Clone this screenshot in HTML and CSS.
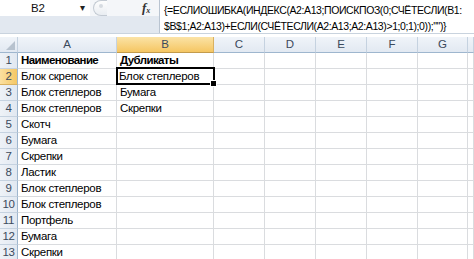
FILE: index.html
```html
<!DOCTYPE html>
<html lang="ru">
<head>
    <meta charset="UTF-8">
    <title>Дубликаты</title>
    <link rel="stylesheet" href="styles.css">
</head>
<body>
    <div class="formula-bar">
        <div class="name-side">
            <div class="name-row">
                <div class="name-box">B2<span class="drop">&#9662;</span></div>
                <div class="splitter"><span></span></div>
                <div class="fx"><i>f</i><sub>x</sub></div>
            </div>
        </div>
        <div class="formula">{=ЕСЛИОШИБКА(ИНДЕКС(A2:A13;ПОИСКПОЗ(0;СЧЁТЕСЛИ(B1:<br>$B$1;A2:A13)+ЕСЛИ(СЧЁТЕСЛИ(A2:A13;A2:A13)&gt;1;0;1);0));"")}</div>
    </div>

    <div class="sheet">
        <div class="row heads">
            <div class="corner"><span class="tri"></span></div>
            <div class="ch">A</div><div class="ch active">B</div><div class="ch">C</div><div class="ch">D</div>
            <div class="ch">E</div><div class="ch">F</div><div class="ch">G</div><div class="ch"></div>
        </div>
        <div class="row">
            <div class="rh">1</div>
            <div class="c b">Наименование</div><div class="c b">Дубликаты</div>
            <div class="c"></div><div class="c"></div><div class="c"></div><div class="c"></div><div class="c"></div><div class="c"></div>
        </div>
        <div class="row">
            <div class="rh active">2</div>
            <div class="c">Блок скрепок</div><div class="c sel">Блок степлеров</div>
            <div class="c"></div><div class="c"></div><div class="c"></div><div class="c"></div><div class="c"></div><div class="c"></div>
        </div>
        <div class="row">
            <div class="rh">3</div>
            <div class="c">Блок степлеров</div><div class="c">Бумага</div>
            <div class="c"></div><div class="c"></div><div class="c"></div><div class="c"></div><div class="c"></div><div class="c"></div>
        </div>
        <div class="row">
            <div class="rh">4</div>
            <div class="c">Блок степлеров</div><div class="c">Скрепки</div>
            <div class="c"></div><div class="c"></div><div class="c"></div><div class="c"></div><div class="c"></div><div class="c"></div>
        </div>
        <div class="row">
            <div class="rh">5</div>
            <div class="c">Скотч</div><div class="c"></div>
            <div class="c"></div><div class="c"></div><div class="c"></div><div class="c"></div><div class="c"></div><div class="c"></div>
        </div>
        <div class="row">
            <div class="rh">6</div>
            <div class="c">Бумага</div><div class="c"></div>
            <div class="c"></div><div class="c"></div><div class="c"></div><div class="c"></div><div class="c"></div><div class="c"></div>
        </div>
        <div class="row">
            <div class="rh">7</div>
            <div class="c">Скрепки</div><div class="c"></div>
            <div class="c"></div><div class="c"></div><div class="c"></div><div class="c"></div><div class="c"></div><div class="c"></div>
        </div>
        <div class="row">
            <div class="rh">8</div>
            <div class="c">Ластик</div><div class="c"></div>
            <div class="c"></div><div class="c"></div><div class="c"></div><div class="c"></div><div class="c"></div><div class="c"></div>
        </div>
        <div class="row">
            <div class="rh">9</div>
            <div class="c">Блок степлеров</div><div class="c"></div>
            <div class="c"></div><div class="c"></div><div class="c"></div><div class="c"></div><div class="c"></div><div class="c"></div>
        </div>
        <div class="row">
            <div class="rh">10</div>
            <div class="c">Блок степлеров</div><div class="c"></div>
            <div class="c"></div><div class="c"></div><div class="c"></div><div class="c"></div><div class="c"></div><div class="c"></div>
        </div>
        <div class="row">
            <div class="rh">11</div>
            <div class="c">Портфель</div><div class="c"></div>
            <div class="c"></div><div class="c"></div><div class="c"></div><div class="c"></div><div class="c"></div><div class="c"></div>
        </div>
        <div class="row">
            <div class="rh">12</div>
            <div class="c">Бумага</div><div class="c"></div>
            <div class="c"></div><div class="c"></div><div class="c"></div><div class="c"></div><div class="c"></div><div class="c"></div>
        </div>
        <div class="row">
            <div class="rh">13</div>
            <div class="c">Скрепки</div><div class="c"></div>
            <div class="c"></div><div class="c"></div><div class="c"></div><div class="c"></div><div class="c"></div><div class="c"></div>
        </div>
    </div>
</body>
</html>
```

FILE: styles.css
```css
body {
    margin: 0;
    font-family: 'Liberation Sans', Arial, sans-serif;
    background: #fff;
    color: #000;
    overflow: hidden;
}
.formula-bar {
    display: flex;
    height: 33px;
    border-bottom: 1px solid #c9d3de;
}
.name-side {
    width: 159px;
    background: #e2e8f0;
    border-right: 1px solid #b9c4d1;
}
.name-row {
    display: flex;
    height: 16px;
    background: #f4f6f9;
}
.name-box {
    position: relative;
    width: 90px;
    background: #fff;
    font-size: 11.5px;
    line-height: 16px;
    text-align: center;
    padding-right: 14px;
    box-sizing: border-box;
    color: #111;
}
.drop {
    position: absolute;
    right: 5px;
    top: 0;
    font-size: 10px;
    color: #222;
}
.splitter {
    width: 14px;
    margin-left: 3px;
    border: 1px solid #c3cad3;
    border-right: none;
    border-radius: 9px 0 0 9px;
    background: linear-gradient(#fdfdfd, #e9edf2);
    box-sizing: border-box;
}
.splitter span {
    display: block;
    width: 4px;
    height: 4px;
    margin: 3px 0 0 5px;
    border-radius: 50%;
    background: #d6dbe1;
}
.fx {
    margin-left: auto;
    width: 17px;
    font-family: 'Liberation Serif', serif;
    font-weight: bold;
    font-size: 13px;
    line-height: 16px;
    color: #333;
}
.fx sub {
    font-size: 8px;
    font-style: italic;
    vertical-align: -1px;
}
.formula {
    flex: 1;
    padding: 2px 0 0 4px;
    font-size: 10.5px;
    letter-spacing: -0.4px;
    line-height: 16px;
    white-space: nowrap;
    overflow: hidden;
    color: #000;
}
.sheet {
    margin-top: 3px;
}
.row {
    display: grid;
    grid-template-columns: 18px 99px 97px 51px 51px 51px 51px 50px 1fr;
    height: 16px;
}
.row > div {
    border-right: 1px solid #dadcdf;
    border-bottom: 1px solid #dadcdf;
    box-sizing: border-box;
    font-size: 11.5px;
    line-height: 15px;
    white-space: nowrap;
    overflow: hidden;
}
.heads > div {
    background: linear-gradient(#f0f4f9, #e2e9f2);
    border-right-color: #c5d2e0;
    border-bottom-color: #9eb6ce;
    color: #3b4a5c;
    text-align: center;
}
.heads > .active {
    background: linear-gradient(#fbe3a6, #f5c663);
    border-right-color: #d9b161;
    border-bottom-color: #c39b4c;
}
.corner {
    position: relative;
}
.tri {
    position: absolute;
    right: 2px;
    bottom: 2px;
    border-left: 9px solid transparent;
    border-bottom: 9px solid #b7c2ce;
}
.row > .rh {
    background: linear-gradient(90deg, #eef2f7, #e1e8f1);
    border-right-color: #9eb6ce;
    border-bottom-color: #c5d2e0;
    color: #3b4a5c;
    text-align: center;
    letter-spacing: -0.3px;
}
.row > .rh.active {
    background: linear-gradient(90deg, #fbe0a0, #f4c765);
    border-bottom-color: #d9b161;
}
.c {
    padding-left: 3px;
    letter-spacing: -0.3px;
}
.row > .b {
    font-weight: bold;
    letter-spacing: -0.6px;
}
.row > .sel {
    position: relative;
    overflow: visible;
    padding-left: 2px;
}
.sel::after {
    content: '';
    position: absolute;
    left: -1px;
    top: -2px;
    right: -2px;
    bottom: -1px;
    border: 2px solid #000;
}
.sel::before {
    content: '';
    position: absolute;
    right: -4px;
    bottom: -3px;
    width: 5px;
    height: 5px;
    background: #000;
    border: 1px solid #fff;
    z-index: 1;
}
```
